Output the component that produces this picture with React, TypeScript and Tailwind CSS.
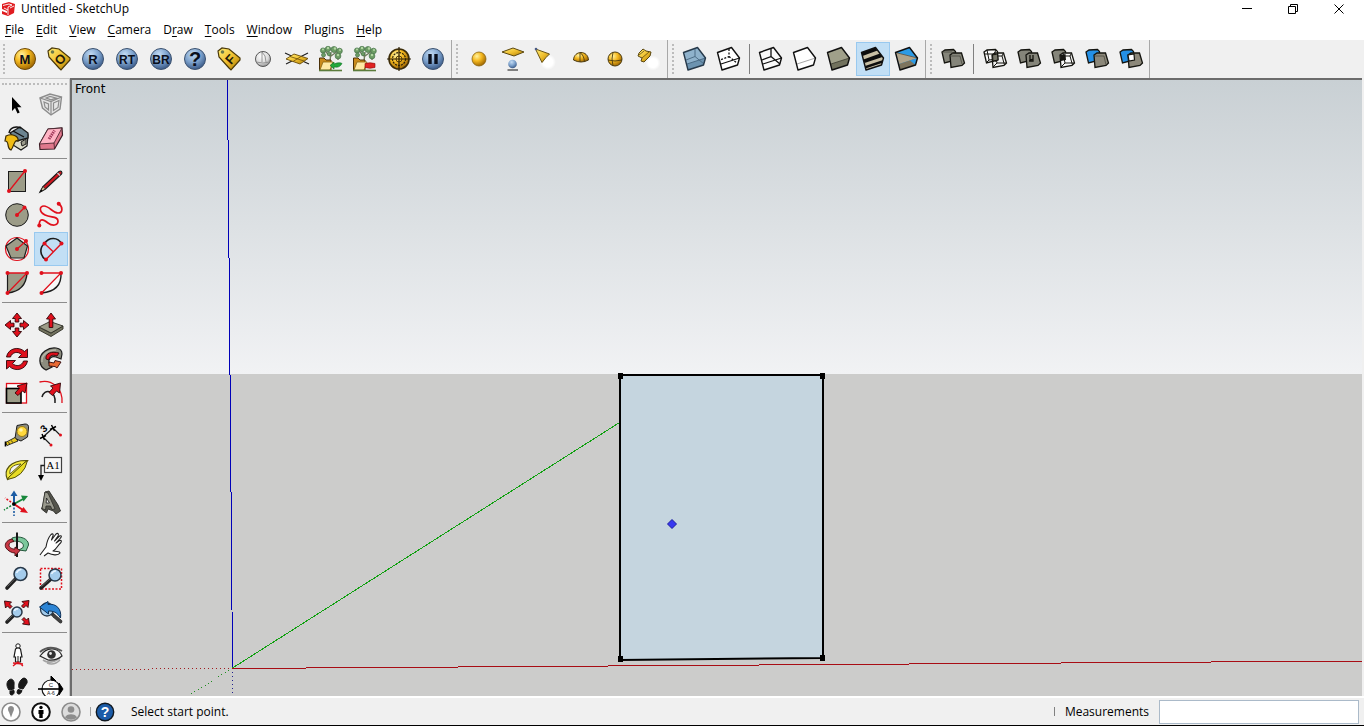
import React from "react";

const STONE = "#9c9c88";
const RED = "#e0101c";

function Icon({ children }: { children: React.ReactNode }) {
  return (
    <svg viewBox="0 0 34 34" className="size-[34px] shrink-0" aria-hidden="true">
      {children}
    </svg>
  );
}

function Defs() {
  return (
    <svg className="absolute size-0" aria-hidden="true">
      <defs>
        <radialGradient id="gold" cx="0.35" cy="0.3" r="0.75">
          <stop offset="0" stopColor="#fff3a0" />
          <stop offset="0.45" stopColor="#f5b920" />
          <stop offset="1" stopColor="#9a6200" />
        </radialGradient>
        <radialGradient id="blue" cx="0.4" cy="0.28" r="0.8">
          <stop offset="0" stopColor="#c4dcf4" />
          <stop offset="0.5" stopColor="#7ba0cb" />
          <stop offset="1" stopColor="#2c4a78" />
        </radialGradient>
        <radialGradient id="pearl" cx="0.4" cy="0.3" r="0.75">
          <stop offset="0" stopColor="#ffffff" />
          <stop offset="0.6" stopColor="#dcdcdc" />
          <stop offset="1" stopColor="#888888" />
        </radialGradient>
        <linearGradient id="brass" x1="0" y1="0" x2="1" y2="1">
          <stop offset="0" stopColor="#fff07a" />
          <stop offset="0.5" stopColor="#f0c030" />
          <stop offset="1" stopColor="#a87800" />
        </linearGradient>
        <radialGradient id="haze">
          <stop offset="0.6" stopColor="#ffffff" />
          <stop offset="1" stopColor="#ffffff" stopOpacity="0" />
        </radialGradient>
      </defs>
    </svg>
  );
}

function Ball({ label, tone }: { label: string; tone: "gold" | "blue" }) {
  return (
    <Icon>
      <circle cx="17" cy="17" r="10.5" fill={tone === "gold" ? "url(#gold)" : "url(#blue)"} stroke={tone === "gold" ? "#6e4a08" : "#3c5270"} strokeWidth="1" />
      <text x="17" y={label === "?" ? 24 : 21.5} textAnchor="middle" fontFamily="Liberation Sans, sans-serif" fontWeight="700" fontSize={label === "?" ? 20 : label.length > 1 ? 12 : 13} fill="#0a0f1c">
        {label}
      </text>
    </Icon>
  );
}

function Tag({ label }: { label: string }) {
  return (
    <Icon>
      <path d="M6 9 L10 6 L17 7 L28 16 L28 18 L19 28 L17 26 L7 15Z" fill="url(#brass)" stroke="#4a3808" strokeWidth="1.2" />
      <circle cx="10.5" cy="10" r="1.8" fill="#6b7a4a" />
      <text x="0" y="5" textAnchor="middle" transform="translate(18 17) rotate(-48)" fontFamily="Liberation Sans, sans-serif" fontWeight="700" fontSize="13" fill="#20180a">
        {label}
      </text>
    </Icon>
  );
}

function Tree({ add }: { add: boolean }) {
  return (
    <Icon>
      <path d="M16 19 L17 10 M17 15 L11 9 M17 14 L24 9 M24 18 L24 11" stroke="#6f7a5c" strokeWidth="1.4" fill="none" />
      <g fill="#6c9c64" stroke="#47744a" strokeWidth="0.7">
        <circle cx="9" cy="8.500" r="2.6" />
        <circle cx="14" cy="7" r="2.7" />
        <circle cx="20" cy="7.500" r="3" />
        <circle cx="25.500" cy="9" r="2.800" />
        <circle cx="24" cy="14" r="2.900" />
        <circle cx="9.500" cy="13" r="2" />
        <circle cx="15" cy="12" r="1.800" />
      </g>
      <g fill="#b4d8a4">
        <circle cx="9" cy="7.500" r="1" />
        <circle cx="14" cy="6" r="1.2" />
        <circle cx="21" cy="6.500" r="1.2" />
        <circle cx="26" cy="8" r="1" />
        <circle cx="24" cy="13" r="1.2" />
      </g>
      <path d="M5.500 28 V16 H10 L12 18 H17 V28Z" fill="#c98a1c" stroke="#4a3008" />
      <path d="M6 28 L9 20 H19 L16 28Z" fill="#ffe9a4" stroke="#8a6410" strokeWidth="0.8" />
      <path d="M5 28.500 H28" stroke="#5c7c3c" strokeWidth="1.6" />
      {add ? (
        <path d="M16 23.500 L20 20 V22 C23 20.500 27 20.500 28 21.500 C26 25 24 25.500 20 25 V27Z" fill="#22a83c" stroke="#0c6a20" strokeWidth="0.6" />
      ) : (
        <path d="M17 21.500 Q22 20 27 21.500 V25.500 Q22 27 17 25.500Z" fill="#e02424" stroke="#8c0808" strokeWidth="0.6" />
      )}
    </Icon>
  );
}

const SphereSmall = () => (
  <Icon>
    <circle cx="17" cy="17" r="7.5" fill="url(#pearl)" stroke="#585858" />
    <path d="M16 10 V20 M10 20 Q17 22 24 20 M16 10 Q20 13 20 20" stroke="#8c8c8c" fill="none" strokeWidth="0.9" />
  </Icon>
);
const Plane = () => (
  <Icon>
    <path d="M5 11 L29 22 M6 22 L28 11" stroke="#1c1c1c" strokeWidth="1.1" />
    <path d="M6 17 L14 12 L28 16.500 L20 22Z" fill="url(#brass)" stroke="#6a4c08" strokeWidth="0.9" />
    <path d="M10 14.500 L24 19 M13 19.500 L21 14.500" stroke="#6a4c08" strokeWidth="0.8" />
  </Icon>
);
const Target = () => (
  <Icon>
    <circle cx="17" cy="17" r="10" fill="url(#gold)" stroke="#3c2c08" strokeWidth="1.6" />
    <circle cx="17" cy="17" r="6.500" fill="none" stroke="#2c2008" strokeWidth="1.2" strokeDasharray="2 1" />
    <circle cx="17" cy="17" r="3" fill="none" stroke="#5c4008" />
    <path d="M17 5 V29 M5 17 H29" stroke="#2c2008" strokeWidth="1.200" />
  </Icon>
);
const Pause = () => (
  <Icon>
    <circle cx="17" cy="17" r="10.5" fill="url(#blue)" stroke="#3c5270" />
    <path d="M14 12 V22 M20 12 V22" stroke="#0a0f1c" strokeWidth="3.4" />
  </Icon>
);

const PointLight = () => (
  <Icon>
    <circle cx="17" cy="17" r="7" fill="url(#gold)" stroke="#8a6410" strokeWidth="0.8" />
  </Icon>
);
const RectLight = () => (
  <Icon>
    <path d="M6 10 L17 6 L28 10 L18 14Z" fill="url(#brass)" stroke="#5c4810" />
    <circle cx="16.5" cy="22" r="4.3" fill="url(#blue)" />
    <path d="M11.5 28 H22" stroke="#505050" strokeWidth="1.4" />
  </Icon>
);
const SpotLight = () => (
  <Icon>
    <circle cx="18" cy="20" r="8" fill="url(#haze)" />
    <path d="M5.500 7 L19.500 12 Q16 15 12 20.500Z" fill="url(#brass)" stroke="#6a5414" />
    <circle cx="6" cy="7" r="1.3" fill="#4c5c84" />
  </Icon>
);
const DomeLight = () => (
  <Icon>
    <path d="M9.500 18 C10 8 24 8 24.500 18 Q17 22 9.500 18Z" fill="url(#gold)" stroke="#4c3c10" />
    <path d="M16 10.500 V20 M16 10.500 Q20 13 20.500 20" stroke="#4c3c10" fill="none" strokeWidth="0.9" />
  </Icon>
);
const SphereLight = () => (
  <Icon>
    <circle cx="17" cy="17" r="7" fill="url(#gold)" stroke="#4c3c10" />
    <path d="M15 10 Q13 17 15 24 M10 18 Q17 20 24 18" stroke="#4c3c10" fill="none" strokeWidth="0.9" />
  </Icon>
);
const IesLight = () => (
  <Icon>
    <circle cx="21" cy="21" r="7.500" fill="url(#haze)" />
    <path d="M6 14 L7 11 L11 7 L14 9 L19 10 L18 14 L12 20 L9 19 L10 16Z" fill="url(#brass)" stroke="#5c4810" />
    <path d="M7 13 L12 9 M10 16 L17 10" stroke="#5c4810" strokeWidth="0.8" />
  </Icon>
);

const CUBE = "M5.5 10.5 L19.500 5.500 L27.500 16 L25.500 23 L10 28Z";
function Cube({ kind }: { kind: "xray" | "back" | "wire" | "hidden" | "shaded" | "texture" | "mono" }) {
  const fill = { xray: "#8fb2cc", back: "#ffffff", wire: "#fafafa", hidden: "#ffffff", shaded: "#a0a08a", texture: "#c8bfa4", mono: "#2d9be6" }[kind];
  return (
    <Icon>
      <path d={CUBE} fill={fill} />
      {kind === "xray" && <path d="M9 22 L27.500 16 L25.500 23 L10 28Z" fill="#6c93b0" />}
      {kind === "shaded" && <path d="M9 22 L27.500 16 L25.500 23 L10 28Z" fill="#72725e" />}
      {kind === "mono" && (
        <>
          <path d="M5.500 10.500 L27.500 16 L9 22Z" fill="#b0a48c" />
          <path d="M9 22 L27.500 16 L25.500 23 L10 28Z" fill="#7d745e" />
          <path d="M20 18.500 L27.500 16 L25.500 23Z" fill="#2d9be6" />
          <path d="M5.500 10.500 L27.500 16" stroke="#5c5040" strokeWidth="0.8" />
        </>
      )}
      {kind === "texture" && (
        <g fill="#0c0c0c">
          <path d="M5.500 10.500 L19.500 5.500 L21.500 8.500 L6.500 14Z" />
          <path d="M7.500 17.500 L24 11.500 L26.500 15 L8.500 21Z" />
          <path d="M9 24 L27 18 L26 21 L9.500 26.500Z" />
        </g>
      )}
      {(kind === "xray" || kind === "wire") && (
        <path d="M9 22 L27.500 16 M17 6.500 V14.500 L8 18 M17 14.500 L26 22" stroke={kind === "xray" ? "#45657f" : "#101010"} strokeWidth={kind === "xray" ? 0.9 : 1.3} fill="none" />
      )}
      {kind === "back" && (
        <>
          <path d="M9 22 L27.500 16" stroke="#101010" strokeWidth="1.200" fill="none" />
          <path d="M17 7 V14.500 L8 18 M17 14.500 L25 21" stroke="#101010" strokeWidth="1.300" strokeDasharray="2 1.500" fill="none" />
        </>
      )}
      {kind === "hidden" && <path d="M9 22 L27.500 16" stroke="#909090" strokeWidth="0.8" />}
      {kind === "shaded" && <path d="M9 22 L27.500 16" stroke="#3c3c30" strokeWidth="0.800" />}
      <path d={CUBE} fill="none" stroke={kind === "xray" ? "#26394a" : "#101010"} strokeWidth="1.400" strokeLinejoin="round" />
    </Icon>
  );
}

const BACK_BOX = "M6 10 L9 8 L17.500 7.500 L19.500 9.500 L20 18 L8.500 21Z";
const FRONT_BOX = "M14 13 L17 11 L25.500 11 L28.500 21 L26 23.500 L15 25.500Z";
function Solid({ kind }: { kind: "shell" | "intersect" | "union" | "subtract" | "trim" | "split" }) {
  const back = { shell: "#85857a", intersect: "#fafafa", union: "#85857a", subtract: "#85857a", trim: "#2490e6", split: "#2490e6" }[kind];
  const front = { shell: "#85857a", intersect: "none", union: "#85857a", subtract: "#fafafa", trim: "#8c887a", split: "#8c887a" }[kind];
  const wire = kind === "intersect";
  return (
    <Icon>
      <path d={BACK_BOX} fill={back} stroke="#14140f" strokeWidth="1.300" />
      <path d={FRONT_BOX} fill={front} stroke="#14140f" strokeWidth="1.300" />
      {(wire || kind === "subtract") && (
        <path d="M14 14 L24 14 L26.500 23 M24 14 L25.500 11 M17 11 L19 21 L28 21 M19 21 L15 25" stroke="#14140f" fill="none" />
      )}
      {wire && <path d="M6 12 H16 L18 20 M16 12 L18 8 M9 8 L11 18 L20 17 M11 18 L8 21" stroke="#14140f" fill="none" />}
      {wire && <path d="M14.500 13 L19.500 12 L20 18 L15 19Z" fill="#77776a" stroke="#14140f" />}
      {kind === "subtract" && <path d="M14 13 L19.500 12 L20 18 L15 19Z" fill="#181814" />}
      {kind === "union" && <path d="M18 13 V18 L21 17 M17 19 H21 V13" stroke="#14140f" fill="none" strokeWidth="1.300" />}
      {kind === "shell" && <path d="M6 10 H16 L17 12 M14 14 L24 14 L26 22" stroke="#44443a" fill="none" strokeWidth="0.7" />}
      {kind === "trim" && <path d="M14.500 14 L24 14 L26 23" stroke="#44443a" fill="none" strokeWidth="0.7" />}
      {kind === "split" && <path d="M14 13 L20 12 L20.500 18 L15 19Z" fill="#ffffff" stroke="#14140f" strokeWidth="1.200" />}
    </Icon>
  );
}

const Dots = ({ points, r = 2 }: { points: number[][]; r?: number }) => (
  <>
    {points.map(([x, y]) => (
      <circle key={`${x}-${y}`} cx={x} cy={y} r={r} fill={RED} />
    ))}
  </>
);

const Select = () => (
  <Icon>
    <path d="M12 9 V23 L15 20 L17.500 25.500 L19.700 24.500 L17.300 19.300 H21.500Z" fill="#000000" />
  </Icon>
);
const Component = () => (
  <Icon>
    <path d="M6 10 L16 6 L27.500 9 L26 21 L17 27 L8.500 20Z" fill="#e4e4e4" stroke="#8c8c8c" strokeWidth="1.400" />
    <path d="M6 10 L17 13.500 L27.500 9 M17 13.500 V27 M10 14 L14.500 16 V22 L11 19Z M19.500 15 L25 12.500 L24 19.500 L19.500 22.500Z M12 10 L16 8.500 L22 10 L17 11.800Z" fill="none" stroke="#8c8c8c" strokeWidth="1.2" />
  </Icon>
);
const Paint = () => (
  <Icon>
    <path d="M13 14 L22 10 L28 13 L27 24 L21 28 L13 23Z" fill="#dcdcc8" stroke="#1c1c1c" strokeWidth="1.300" />
    <path d="M10 11 L20 5 L28 11 L28 16 L17 19Z" fill="#6c8490" stroke="#181818" strokeWidth="1.300" />
    <path d="M9 11 C10 5 16 4 21 6 M13 9 L24 15" stroke="#101010" strokeWidth="1.400" fill="none" />
    <path d="M6 14 C12 11 19 14 18 19 C14 17 14 25 11 28 C6 26 10 19 5 19Z" fill="#f0bc14" stroke="#3c2c04" strokeWidth="1.200" />
    <path d="M21 20 L26 17 V22 L22 24Z" fill="#9c9c8c" stroke="#1c1c1c" />
  </Icon>
);
const Eraser = () => (
  <Icon>
    <path d="M5.500 22 L14 7 L28 6 L28.500 13 L20.500 27 L6 27.500Z" fill="#e0788c" stroke="#3c1c24" strokeWidth="1.200" />
    <path d="M5.500 22 L14 7 L28 6 L20 21Z" fill="#ffb4c4" stroke="#3c1c24" strokeWidth="0.8" />
    <path d="M20 21 L20.500 27" stroke="#3c1c24" strokeWidth="0.800" />
    <path d="M15 17 L20.500 8.500" stroke="#a43c5c" strokeWidth="3" strokeDasharray="1.500 0.800" />
  </Icon>
);
const RectTool = () => (
  <Icon>
    <rect x="8.500" y="7.500" width="17" height="20" fill={STONE} stroke="#1c1c1c" />
    <path d="M9 27 L25 7" stroke={RED} strokeWidth="1.300" />
    <Dots points={[[9, 27], [25, 7]]} />
  </Icon>
);
const Pencil = () => (
  <Icon>
    <path d="M6 28 L9 22.500 L25 7.500 Q26.500 6.500 27.500 7.500 Q28.500 9 27.500 10 L11.500 25Z" fill="#d01820" stroke="#1c1c1c" strokeWidth="1.100" />
    <path d="M6 28 L9 22.500 L11.500 25Z" fill="#d8c49c" stroke="#1c1c1c" strokeWidth="0.800" />
    <path d="M6 28 L7.200 25.500 L8.500 27Z" fill="#000000" />
    <path d="M23.500 9 L26 11.500" stroke="#d0d0d0" strokeWidth="1.300" />
  </Icon>
);
const CircleTool = () => (
  <Icon>
    <circle cx="17" cy="17" r="11.300" fill={STONE} stroke="#1c1c1c" />
    <path d="M17 17 L24.500 9.500" stroke={RED} strokeWidth="1.400" />
    <Dots points={[[17, 17], [24.5, 9.5]]} />
  </Icon>
);
const Freehand = () => (
  <Icon>
    <path d="M5.300 27.500 C5 19 10 22 14 25 S24 28 24 23 S17 20 11 17 S5 8 10 8 S19 15 24 15 S29 9 25 6" fill="none" stroke={RED} strokeWidth="1.700" />
    <Dots points={[[5.3, 27.5], [24.7, 5.7]]} />
  </Icon>
);
const Polygon = () => (
  <Icon>
    <circle cx="17" cy="17" r="11.500" fill="none" stroke={RED} strokeWidth="1.200" />
    <path d="M17 6 L27.500 14 L24 26 L11 26 L6 14Z" fill={STONE} stroke="#1c1c1c" strokeWidth="1.200" />
    <path d="M17 17 L26 9" stroke={RED} strokeWidth="1.300" />
    <Dots points={[[17, 17], [26, 9]]} />
  </Icon>
);
const ArcTool = () => (
  <Icon>
    <path d="M27.500 11.500 C24 5 15 4.500 10.500 11.500 C5 16 6 24 12 28" fill="none" stroke="#1c1c1c" strokeWidth="1.600" />
    <path d="M27.500 11.500 L12 27.500 M10.500 11.500 L19.500 20" stroke={RED} strokeWidth="1.400" />
    <Dots points={[[27.5, 11.5], [12, 27.5], [10.5, 11.5]]} />
  </Icon>
);
function Pie({ filled }: { filled: boolean }) {
  return (
    <Icon>
      <path d={filled ? "M7.500 7 H27 Q26 25 7.500 27Z" : "M27 7 Q28 25 7.500 27Z"} fill={filled ? STONE : "#f8f8f8"} />
      {filled && <path d="M7.500 7 V27" stroke="#1c1c1c" strokeWidth="1.200" />}
      <path d={filled ? "M27 7 Q26 25 7.500 27" : "M27 7 Q28 25 7.500 27"} fill="none" stroke="#1c1c1c" strokeWidth="1.400" />
      <path d="M7.500 7 H27 L7.500 27" fill="none" stroke={RED} strokeWidth="1.300" />
      <Dots points={[[7.5, 7], [27, 7], [7.5, 27]]} />
    </Icon>
  );
}
const Move = () => (
  <Icon>
    {[0, 90, 180, 270].map((a) => (
      <path key={a} d="M17 5 L21.500 10.500 H18.800 V14 H15.200 V10.500 H12.500Z" fill={RED} stroke="#300408" strokeWidth="0.9" transform={`rotate(${a} 17 17)`} />
    ))}
  </Icon>
);
const PushPull = () => (
  <Icon>
    <path d="M5 19 L17 25 L29 18 V21 L17 28.500 L5 22Z" fill="#72725e" stroke="#2c2c24" strokeWidth="0.900" />
    <path d="M5 19 L16 13.500 L29 18 L17 25Z" fill={STONE} stroke="#2c2c24" strokeWidth="0.900" />
    <path d="M17 5 L21.500 11 H18.800 V19.500 H15.200 V11 H12.500Z" fill={RED} stroke="#300408" strokeWidth="0.900" />
  </Icon>
);
const Rotate = () => (
  <Icon>
    {[0, 180].map((a) => (
      <path key={a} d="M6.500 15 C8 6 19 4 24.500 9.500 L27.500 7 V15.500 H18.500 L21.500 12.500 C18 9 12 10 10.500 15Z" fill={RED} stroke="#300408" strokeWidth="0.900" transform={`rotate(${a} 17 17)`} />
    ))}
  </Icon>
);
const FollowMe = () => (
  <Icon>
    <path d="M28 12 C28 5 18 4 11 9 C4 14 4 24 12 28 L18 25 L15 21 C14 16 18 14 22 15 L27 17Z" fill="#8c8c7e" stroke="#1c1c1c" strokeWidth="1.200" />
    <path d="M8 20 C7 13 14 8 22 8" stroke="#b8b8aa" strokeWidth="1.500" fill="none" />
    <path d="M12 17 C11 11 18 9 25 11 L23 14 C18 12 15 14 15 18Z" fill={RED} stroke="#300408" strokeWidth="0.900" />
    <path d="M15 20 L20 21 L21 18.500 L27 20 L23 26 L21 24.500 L15 24Z" fill="#e86a34" stroke="#300408" strokeWidth="0.900" />
  </Icon>
);
const Scale = () => (
  <Icon>
    <rect x="6.500" y="7.500" width="20" height="19.500" fill="#ffffff" stroke={RED} strokeWidth="1.300" />
    <rect x="6.500" y="12.500" width="14.500" height="14.500" fill={STONE} stroke="#000000" strokeWidth="1.600" />
    <path d="M15 17 L19.500 12 L17 10 L27 7 L25 17 L22.500 15 L18 19.500Z" fill={RED} stroke="#300408" strokeWidth="0.900" />
  </Icon>
);
const Offset = () => (
  <Icon>
    <path d="M5.500 6 C17 3 29 11 28 27" fill="none" stroke={RED} strokeWidth="1.300" />
    <path d="M8 21 C10 12 22 14 21 27" fill="none" stroke="#1c1c1c" strokeWidth="1.500" />
    <path d="M15 16.500 L19 12 L16.500 10 L26.500 7 L25.500 17 L22.500 15 L18.500 19.500Z" fill={RED} stroke="#300408" strokeWidth="0.900" />
  </Icon>
);
const Tape = () => (
  <Icon>
    <path d="M17 7.500 L25 6 Q29 6 28.500 10 L27.500 19 L21 23 L15 20.500Z" fill="#8c8c80" stroke="#1c1c1c" />
    <circle cx="22" cy="13.500" r="5" fill="#ffd83c" stroke="#9c7c14" />
    <circle cx="21" cy="12" r="1.800" fill="#fff4b0" />
    <path d="M15 19.500 L5.500 24.500 L7 27.500 L18 23Z" fill="#e8c820" stroke="#1c1c1c" strokeWidth="0.900" />
    <path d="M5.500 23.500 V28.500" stroke="#000000" strokeWidth="1.600" />
    <path d="M8.500 24 L9.500 26 M11.500 22.500 L12.500 24.500" stroke="#1c1c1c" strokeWidth="0.8" />
  </Icon>
);
const Dimension = () => (
  <Icon>
    <path d="M9 19 L19 10 M9 19 L16 26 M19 10 L26 17" stroke="#1c1c1c" strokeWidth="1.200" />
    <path d="M8 16 L10.500 22 M6 20.500 L12 17.500 M17.500 7 L20.500 13 M16 11.500 L22 8.500" stroke="#000000" strokeWidth="1.400" />
    <Dots points={[[17, 27], [26.5, 17]]} r={1.5} />
    <text x="0" y="0" transform="translate(10 15) rotate(-42)" fontFamily="Liberation Sans, sans-serif" fontWeight="700" fontSize="10" fill="#000000">3</text>
  </Icon>
);
const Protractor = () => (
  <Icon>
    <path d="M7.500 27.500 C3 18 10 8 27.500 8.500Z" fill="#f4ea3c" stroke="#54500c" strokeWidth="1.200" />
    <path d="M7.500 27.500 Q24 25 27.500 8.500 L24 11 L9 25Z" fill="#e8dc24" stroke="#54500c" />
    <path d="M10 22 C9 16 13 12.500 21 12Z" fill="#f4f4f4" stroke="#54500c" strokeWidth="0.900" />
  </Icon>
);
const TextTool = () => (
  <Icon>
    <rect x="10.500" y="5.500" width="17" height="15" fill="#f8f8f8" stroke="#404040" strokeWidth="1.200" />
    <text x="19" y="17" textAnchor="middle" fontFamily="Liberation Serif, serif" fontSize="11" fill="#000000">A1</text>
    <path d="M10.500 13.500 H7 V23" fill="none" stroke="#1c1c1c" strokeWidth="1.300" />
    <path d="M4 23 H10 L7 29Z" fill="#000000" />
  </Icon>
);
const Axes = () => (
  <Icon>
    <path d="M14 18 V9" stroke="#1c5ca4" strokeWidth="2" />
    <path d="M10.500 10 L14 4.500 L17.500 10Z" fill="#1c5ca4" />
    <path d="M14 18 L23 13" stroke="#18883c" strokeWidth="2" />
    <path d="M21 9.500 L28 10 L23.500 15.500Z" fill="#18883c" />
    <path d="M14 18 L23 24" stroke={RED} strokeWidth="2" />
    <path d="M20 26 L23.500 21 L28 27Z" fill={RED} />
    <path d="M14 18 L5 12" stroke={RED} strokeWidth="1.600" strokeDasharray="2 1.500" />
    <path d="M14 18 L4 24" stroke="#18883c" strokeWidth="1.600" strokeDasharray="2 1.500" />
    <path d="M14 18 V30" stroke="#1c5ca4" strokeWidth="1.600" strokeDasharray="2 1.500" />
    <circle cx="14" cy="18" r="1.800" fill="#000000" />
  </Icon>
);
const Text3D = () => (
  <Icon>
    <path d="M11 6 L15 5 L24 19 L26.500 25 L22 28 L19.500 25 L14 23 L12.500 27 L7.500 23 L9 19Z" fill="#54544c" stroke="#2c2c28" strokeWidth="0.900" />
    <path d="M11 6 L14 7 L21 23 L18 23.500 L16.500 20 L12 20 L11.500 24 L8 22.500Z" fill="#98988c" stroke="#2c2c28" strokeWidth="0.800" />
    <path d="M12.500 12 L15.500 17 H12.200Z" fill="#f0f0f0" stroke="#1c1c1c" strokeWidth="0.800" />
  </Icon>
);
const Orbit = () => (
  <Icon>
    <path d="M12 10 C20 7 29 11 28.500 17 L26 23 L19 22 L23 19.500 C25 15 19 12 12 13.500Z" fill="#7cc89c" stroke="#14482c" strokeWidth="0.900" />
    <path d="M17 4.500 V29" stroke="#181818" strokeWidth="2" />
    <path d="M12 11 C6 12 4 17 6 20 C8 23 12 25 15 25 V28 L20 22.500 L15 19 V21 C11 21 9 19 9 17 C9 15 11 14 14 13.500Z" fill="#c83844" stroke="#44080c" strokeWidth="0.900" />
  </Icon>
);
const Hand = () => (
  <Icon>
    <path d="M6 27 L12 19 C13 13 14 10 17 6.500 C19 5 20 6.500 18.500 9 L17.500 12 L22 6 C24 4.500 25 6 24 8 L20.500 13 L25.500 8 C27.500 7 28 8.500 26.500 10 L22 15 L25.500 12.500 C27.500 12 28 13.500 26.500 15 C23 18 23 21 19 23 C23 24 26 23 26 25 C24 28 18 27 14 25 L10 28" fill="#ffffff" stroke="#202020" strokeWidth="1.100" strokeLinejoin="round" />
  </Icon>
);
const Lens = ({ x = 20.500, y = 12, r = 6.5 }: { x?: number; y?: number; r?: number }) => (
  <>
    <path d={`M${x - r + 2} ${y + r - 2} L7 26`} stroke="#202020" strokeWidth="3.600" strokeLinecap="round" />
    <path d={`M${x - r + 1} ${y + r - 2} L7.500 24.500`} stroke="#707070" strokeWidth="0.800" />
    <circle cx={x} cy={y} r={r} fill="#a4ccec" stroke="#283848" strokeWidth="1.500" />
    <path d={`M${x - r + 2.5} ${y - 1} Q${x - 2} ${y - r + 1.5} ${x + 1} ${y - r + 2}`} stroke="#e8f4ff" strokeWidth="1.600" fill="none" />
  </>
);
const Zoom = () => (
  <Icon>
    <Lens />
  </Icon>
);
const ZoomWindow = () => (
  <Icon>
    <rect x="6.500" y="6.500" width="21" height="20.500" fill="none" stroke={RED} strokeWidth="1.500" strokeDasharray="2 1.500" />
    <Lens x={21} y={13} r={6} />
  </Icon>
);
const ZoomExtents = () => (
  <Icon>
    <Lens x={17} y={16} r={5} />
    {[0, 90, 180].map((a) => (
      <path key={a} d="M4.500 5 L11.500 6 L9.500 8 L12 10.500 L10 12.500 L7.500 10 L5.500 12Z" fill={RED} stroke="#300408" strokeWidth="0.9" transform={`rotate(${a} 17 17)`} />
    ))}
  </Icon>
);
const Previous = () => (
  <Icon>
    <path d="M17 17 L26.500 25.500" stroke="#303030" strokeWidth="3.600" strokeLinecap="round" />
    <circle cx="13" cy="13.500" r="6.500" fill="#a4ccec" stroke="#283848" strokeWidth="1.300" />
    <path d="M5.500 11 L14 5.500 L14 8.500 C22 7 28 13 26.500 22 C23 16 19 15 14.500 15 V18Z" fill="#2c84d4" stroke="#0c3058" />
    <path d="M20 20 L26.500 25.500" stroke="#404040" strokeWidth="3" strokeLinecap="round" />
  </Icon>
);
const PositionCamera = () => (
  <Icon>
    <circle cx="18" cy="8" r="2.200" fill="#ffffff" stroke="#181818" />
    <path d="M15.500 11 Q18 9 20.500 11 L22 19 H20.500 V24 H15.500 V19 H14Z" fill="#ffffff" stroke="#181818" strokeWidth="1.200" />
    <path d="M18 18 V25" stroke="#181818" />
    <path d="M13 28 L18 24 L23 28 M13 25 L23 26" stroke={RED} strokeWidth="1.300" fill="none" />
  </Icon>
);
const Eye = () => (
  <Icon>
    <path d="M9 22 Q16 27 26 20 M13 25 Q20 28 26 22" fill="none" stroke="#a4a4a4" strokeWidth="1.600" />
    <path d="M6 18 Q12 10 19 11 Q26 12 28 18 Q22 23 14 22Z" fill="#f4f4f4" stroke="#282828" strokeWidth="1.200" />
    <path d="M6 14 Q15 6 28 13" fill="none" stroke="#585858" strokeWidth="1.800" />
    <circle cx="17.500" cy="16.500" r="4.300" fill="#303030" />
    <circle cx="16.500" cy="15.500" r="1.400" fill="#e8e8e8" />
  </Icon>
);
const Walk = () => (
  <Icon>
    <path d="M8 9 C11 5 15 8 14 13 L14 17 L9 18 C7 15 6 12 8 9Z M10 19 L14 18.500 C15 23 11 24 10 22Z" fill="#181818" stroke="#181818" />
    <path d="M21 8 C24 4 28 7 27 11 L23 17 L19 16 C18 13 19 10 21 8Z M18 17.500 L22 18.500 C21 23 17 23 17 20Z" fill="#181818" stroke="#181818" />
  </Icon>
);
const Section = () => (
  <Icon>
    <circle cx="17" cy="17" r="9" fill="#ffffff" stroke="#181818" strokeWidth="1.200" />
    <path d="M17 8 V4 L22 9Z M25 11 L29 17 L25 23Z" fill="#000000" stroke="#000000" />
    <path d="M4 17 H28" stroke="#000000" strokeWidth="1.600" />
    <text x="17" y="14.500" textAnchor="middle" fontFamily="Liberation Sans, sans-serif" fontSize="6" fill="#181818">C</text>
    <text x="17" y="23" textAnchor="middle" fontFamily="Liberation Sans, sans-serif" fontSize="5" fill="#181818">A-6</text>
  </Icon>
);

type Tool = { label: string; icon: React.ReactNode; active?: boolean };

const RENDER: Tool[] = [
  { label: "Material editor", icon: <Ball label="M" tone="gold" /> },
  { label: "Options editor", icon: <Tag label="O" /> },
  { label: "Render", icon: <Ball label="R" tone="blue" /> },
  { label: "Real-time render", icon: <Ball label="RT" tone="blue" /> },
  { label: "Batch render", icon: <Ball label="BR" tone="blue" /> },
  { label: "Help", icon: <Ball label="?" tone="blue" /> },
  { label: "Frame buffer", icon: <Tag label="F" /> },
  { label: "Sphere", icon: <SphereSmall /> },
  { label: "Infinite plane", icon: <Plane /> },
  { label: "Export proxy", icon: <Tree add /> },
  { label: "Import proxy", icon: <Tree add={false} /> },
  { label: "Set camera focus", icon: <Target /> },
  { label: "Freeze view", icon: <Pause /> },
];
const LIGHTS: Tool[] = [
  { label: "Omni light", icon: <PointLight /> },
  { label: "Rectangle light", icon: <RectLight /> },
  { label: "Spot light", icon: <SpotLight /> },
  { label: "Dome light", icon: <DomeLight /> },
  { label: "Sphere light", icon: <SphereLight /> },
  { label: "IES light", icon: <IesLight /> },
];
const FACE_STYLES: Tool[][] = [
  [
    { label: "X-ray", icon: <Cube kind="xray" /> },
    { label: "Back edges", icon: <Cube kind="back" /> },
  ],
  [
    { label: "Wireframe", icon: <Cube kind="wire" /> },
    { label: "Hidden line", icon: <Cube kind="hidden" /> },
    { label: "Shaded", icon: <Cube kind="shaded" /> },
    { label: "Shaded with textures", icon: <Cube kind="texture" />, active: true },
    { label: "Monochrome", icon: <Cube kind="mono" /> },
  ],
];
const SOLIDS: Tool[][] = [
  [{ label: "Outer shell", icon: <Solid kind="shell" /> }],
  [
    { label: "Intersect", icon: <Solid kind="intersect" /> },
    { label: "Union", icon: <Solid kind="union" /> },
    { label: "Subtract", icon: <Solid kind="subtract" /> },
    { label: "Trim", icon: <Solid kind="trim" /> },
    { label: "Split", icon: <Solid kind="split" /> },
  ],
];
const PALETTE: Tool[][] = [
  [
    { label: "Select", icon: <Select /> },
    { label: "Make component", icon: <Component /> },
    { label: "Paint bucket", icon: <Paint /> },
    { label: "Eraser", icon: <Eraser /> },
  ],
  [
    { label: "Rectangle", icon: <RectTool /> },
    { label: "Line", icon: <Pencil /> },
    { label: "Circle", icon: <CircleTool /> },
    { label: "Freehand", icon: <Freehand /> },
    { label: "Polygon", icon: <Polygon /> },
    { label: "2 point arc", icon: <ArcTool />, active: true },
    { label: "Pie", icon: <Pie filled /> },
    { label: "Arc", icon: <Pie filled={false} /> },
  ],
  [
    { label: "Move", icon: <Move /> },
    { label: "Push/Pull", icon: <PushPull /> },
    { label: "Rotate", icon: <Rotate /> },
    { label: "Follow me", icon: <FollowMe /> },
    { label: "Scale", icon: <Scale /> },
    { label: "Offset", icon: <Offset /> },
  ],
  [
    { label: "Tape measure", icon: <Tape /> },
    { label: "Dimension", icon: <Dimension /> },
    { label: "Protractor", icon: <Protractor /> },
    { label: "Text", icon: <TextTool /> },
    { label: "Axes", icon: <Axes /> },
    { label: "3D text", icon: <Text3D /> },
  ],
  [
    { label: "Orbit", icon: <Orbit /> },
    { label: "Pan", icon: <Hand /> },
    { label: "Zoom", icon: <Zoom /> },
    { label: "Zoom window", icon: <ZoomWindow /> },
    { label: "Zoom extents", icon: <ZoomExtents /> },
    { label: "Previous view", icon: <Previous /> },
  ],
  [
    { label: "Position camera", icon: <PositionCamera /> },
    { label: "Look around", icon: <Eye /> },
    { label: "Walk", icon: <Walk /> },
    { label: "Section plane", icon: <Section /> },
  ],
];

function ToolButton({ tool }: { tool: Tool }) {
  return (
    <button
      type="button"
      aria-label={tool.label}
      aria-pressed={tool.active ?? false}
      className={tool.active ? "size-[34px] shrink-0 bg-[#c2dff5] outline outline-1 -outline-offset-1 outline-[#99c9ef]" : "size-[34px] shrink-0"}
    >
      {tool.icon}
    </button>
  );
}

function ToolGroup({ sections, first = false }: { sections: Tool[][]; first?: boolean }) {
  return (
    <div className="flex shrink-0 border-r border-[#a8a8a8] pr-px">
      <div className={first ? "flex w-2 justify-center" : "flex w-[10px] justify-center"}>
        <div className="my-1 w-0 border-l-2 border-dotted border-[#bcbcbc]" />
      </div>
      {sections.map((tools, i) => (
        <div key={tools[0].label} className="flex items-center">
          {i > 0 && <div className="ml-[3px] mr-1 h-[30px] w-px bg-[#808080]" />}
          {tools.map((t) => (
            <ToolButton key={t.label} tool={t} />
          ))}
        </div>
      ))}
    </div>
  );
}

const MENUS = [
  ["", "F", "ile"],
  ["", "E", "dit"],
  ["", "V", "iew"],
  ["", "C", "amera"],
  ["D", "r", "aw"],
  ["", "T", "ools"],
  ["", "W", "indow"],
  ["Plu", "", "gins"],
  ["", "H", "elp"],
];

function Logo() {
  return (
    <svg viewBox="0 0 16 16" className="size-4" aria-hidden="true">
      <path d="M2 3 L9 1 L15 3 L14 12 L8 15 L2 13 L2 10 L7 12 V10 L2 8Z" fill="#e01c20" />
      <path d="M3 4.500 L9 3 L12 4 L8 6 V9 M4 7 L8 9 V14 M10 7 L14 5" stroke="#ffffff" strokeWidth="0.900" fill="none" />
    </svg>
  );
}

function TitleBar() {
  return (
    <header className="flex h-[18px] shrink-0 items-center bg-white pr-0.5">
      <Logo />
      <h1 className="ml-[5px] flex-1 text-[12px] leading-4">Untitled - SketchUp</h1>
      <button type="button" aria-label="Minimize" className="flex h-4 w-[46px] items-center justify-center">
        <svg viewBox="0 0 10 10" className="size-[10px]"><path d="M0 4.500 H10" stroke="#000" /></svg>
      </button>
      <button type="button" aria-label="Restore" className="flex h-4 w-[46px] items-center justify-center">
        <svg viewBox="0 0 10 10" className="size-[10px]"><path d="M0.500 2.500 H7.500 V9.500 H0.500Z M2.500 2.500 V0.500 H9.500 V7.500 H7.500" stroke="#000" fill="none" /></svg>
      </button>
      <button type="button" aria-label="Close" className="flex h-4 w-[46px] items-center justify-center">
        <svg viewBox="0 0 10 10" className="size-[10px]"><path d="M0.500 0.500 L9.500 9.500 M9.500 0.500 L0.500 9.500" stroke="#000" /></svg>
      </button>
    </header>
  );
}

function MenuBar() {
  return (
    <nav className="flex h-[22px] shrink-0 items-center gap-3 bg-white px-[5px] pt-0.5">
      {MENUS.map(([a, b, c]) => (
        <button key={a + b + c} type="button" className="text-[12px] leading-4">
          {a}
          <span className="underline underline-offset-2">{b}</span>
          {c}
        </button>
      ))}
    </nav>
  );
}

function Scene() {
  return (
    <svg viewBox="72 80 1290 616" preserveAspectRatio="xMinYMid slice" className="absolute inset-0 size-full" role="img" aria-label="Model">
      <defs>
        <linearGradient id="sky" x1="0" y1="0" x2="0" y2="1">
          <stop offset="0" stopColor="#c9d0d4" />
          <stop offset="1" stopColor="#f1f2f4" />
        </linearGradient>
      </defs>
      <rect x="72" y="80" width="1290" height="294" fill="url(#sky)" />
      <g shapeRendering="crispEdges" fill="none">
        <path d="M227.500 80 L232.500 668" stroke="#0000b8" />
        <path d="M232.500 668 V696" stroke="#20208c" strokeDasharray="1 3" />
        <path d="M232.500 668 L696 374" stroke="#10a010" />
        <path d="M232.500 668 L188 696" stroke="#208c20" strokeDasharray="1 3" />
        <path d="M232.500 668.500 L1362 661" stroke="#a80c14" />
        <path d="M72 669.500 L232 668.500" stroke="#a01c20" strokeDasharray="1 3" />
      </g>
      <path d="M620 375 H823 V658 L620 660Z" fill="#c5d5df" stroke="#000000" strokeWidth="2" />
      <path d="M618 373 h5 v6 h-5Z M820 373 h5 v6 h-5Z M618 656 h5 v6 h-5Z M820 655 h5 v6 h-5Z" fill="#000000" />
      <path d="M672 519.500 L676.500 524 L672 528.500 L667.500 524Z" fill="#3838f0" stroke="#1c1ca0" strokeWidth="1" />
    </svg>
  );
}

function StatusBar() {
  return (
    <footer className="flex h-[30px] shrink-0 items-center border-b border-t-2 border-b-black border-t-white bg-[#f0f0f0] pr-[5px]">
      <div className="flex items-center gap-[10px] pl-px">
        <button type="button" aria-label="Geo-location">
          <svg viewBox="0 0 20 20" className="size-5">
            <circle cx="10" cy="10" r="9" fill="#fff" stroke="#8c8c8c" strokeWidth="1.600" />
            <path d="M10 4 C6.500 4 6.500 8 8 10 L10 15.500 L12 10 C13.500 8 13.500 4 10 4Z" fill="#8c8c8c" />
          </svg>
        </button>
        <button type="button" aria-label="Credits">
          <svg viewBox="0 0 20 20" className="size-5">
            <circle cx="10" cy="10" r="8.800" fill="#fff" stroke="#101010" strokeWidth="2" />
            <circle cx="10" cy="5.500" r="1.700" fill="#000" />
            <path d="M7.500 8 H12.500 V12 H11.700 V16 H8.300 V12 H7.500Z" fill="#000" />
          </svg>
        </button>
        <button type="button" aria-label="Account">
          <svg viewBox="0 0 20 20" className="size-5">
            <circle cx="10" cy="10" r="9" fill="#dcdcdc" stroke="#8c8c8c" strokeWidth="1.600" />
            <circle cx="10" cy="7.500" r="3.300" fill="#8c8c8c" />
            <path d="M4 15.500 C5 11 15 11 16 15.500 Q10 20 4 15.500Z" fill="#8c8c8c" />
          </svg>
        </button>
      </div>
      <div className="ml-[9px] h-[9px] w-px bg-[#a0a0a0]" />
      <button type="button" aria-label="Instructor" className="ml-1">
        <svg viewBox="0 0 20 20" className="size-5">
          <circle cx="10" cy="10" r="8.700" fill="#1c5ca8" stroke="#101820" strokeWidth="1.400" />
          <text x="10" y="15" textAnchor="middle" fontFamily="Liberation Sans, sans-serif" fontWeight="700" fontSize="14" fill="#fff">?</text>
        </svg>
      </button>
      <p className="ml-4 flex-1 pt-px text-[12px] leading-4">Select start point.</p>
      <div className="h-[9px] w-px bg-[#808080]" />
      <label htmlFor="measurements" className="ml-[10px] pt-px text-[12px] leading-4">
        Measurements
      </label>
      <input id="measurements" type="text" className="ml-[10px] h-6 w-[200px] border border-[#abbac9] bg-white px-1 text-[12px] outline-none" />
    </footer>
  );
}

export default function App() {
  return (
    <div className="flex h-screen flex-col overflow-hidden bg-[#f0f0f0] font-['Open_Sans','Noto_Sans',sans-serif] text-black">
      <Defs />
      <TitleBar />
      <MenuBar />
      <div className="flex h-[38px] shrink-0 overflow-hidden">
        <ToolGroup sections={[RENDER]} first />
        <ToolGroup sections={[LIGHTS]} />
        <ToolGroup sections={FACE_STYLES} />
        <ToolGroup sections={SOLIDS} />
      </div>
      <div className="flex min-h-0 flex-1">
        <aside className="w-[70px] shrink-0 overflow-hidden border-r border-t border-[#c8c8c8]">
          <div className="flex h-[9px] items-center px-0.5">
            <div className="w-full border-t-2 border-dotted border-[#bcbcbc]" />
          </div>
          {PALETTE.map((tools, i) => (
            <div key={tools[0].label}>
              {i > 0 && <div className="mx-0.5 mb-[5px] mt-0.5 h-px bg-[#8c8c8c]" />}
              <div className="flex flex-wrap">
                {tools.map((t) => (
                  <ToolButton key={t.label} tool={t} />
                ))}
              </div>
            </div>
          ))}
        </aside>
        <main className="relative mr-0.5 min-w-0 flex-1 border-l-2 border-t-2 border-[#6c6c6c] bg-[#cccccb]">
          <Scene />
          <p className="absolute left-[3px] top-px font-['DejaVu_Sans',sans-serif] text-[12px] leading-4">Front</p>
        </main>
      </div>
      <StatusBar />
    </div>
  );
}
